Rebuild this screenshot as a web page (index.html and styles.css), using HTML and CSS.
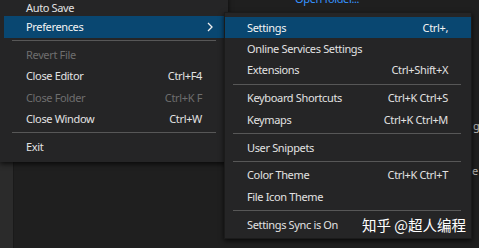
FILE: index.html
```html
<!DOCTYPE html>
<html>
<head>
<meta charset="utf-8">
<link rel="stylesheet" href="styles.css">
</head>
<body>
<div class="workbench">
  <div class="sidebar"></div>
  <div class="editor">
    <div class="editor-main">
      <span class="link">Open folder...</span>
    </div>
    <div class="editor-peek">
      <span class="peek-g">g</span>
      <span class="peek-e">e</span>
    </div>
  </div>
</div>

<div class="menu menu-file">
  <div class="item item-top"><span>Auto Save</span></div>
  <div class="item active has-sub"><span>Preferences</span>
    <svg class="chev" width="6" height="10" viewBox="0 0 6 10"><path d="M1 1 L5 5 L1 9" fill="none" stroke="#f0f0f0" stroke-width="1.3"/></svg>
  </div>
  <div class="sep"></div>
  <div class="item disabled"><span>Revert File</span></div>
  <div class="item"><span>Close Editor</span><span class="key">Ctrl+F4</span></div>
  <div class="item disabled"><span>Close Folder</span><span class="key">Ctrl+K F</span></div>
  <div class="item"><span>Close Window</span><span class="key">Ctrl+W</span></div>
  <div class="sep"></div>
  <div class="item"><span>Exit</span></div>
</div>

<div class="menu menu-sub">
  <div class="item active"><span>Settings</span><span class="key">Ctrl+,</span></div>
  <div class="item"><span>Online Services Settings</span></div>
  <div class="item"><span>Extensions</span><span class="key">Ctrl+Shift+X</span></div>
  <div class="sep"></div>
  <div class="item"><span>Keyboard Shortcuts</span><span class="key">Ctrl+K Ctrl+S</span></div>
  <div class="item"><span>Keymaps</span><span class="key">Ctrl+K Ctrl+M</span></div>
  <div class="sep"></div>
  <div class="item"><span>User Snippets</span></div>
  <div class="sep"></div>
  <div class="item"><span>Color Theme</span><span class="key">Ctrl+K Ctrl+T</span></div>
  <div class="item"><span>File Icon Theme</span></div>
  <div class="sep"></div>
  <div class="item"><span>Settings Sync is On</span></div>
</div>

<div class="watermark">知乎 @超人编程</div>
</body>
</html>
```
FILE: styles.css
```css
html, body {
  margin: 0;
  padding: 0;
}
body {
  width: 479px;
  height: 248px;
  overflow: hidden;
  position: relative;
  background: #1e1e1e;
  font-family: "Noto Sans", "Open Sans", sans-serif;
  font-size: 11px;
  letter-spacing: -0.35px;
}
.workbench {
  display: grid;
  grid-template-columns: 14px 1fr;
  height: 248px;
}
.sidebar {
  background: #2b2b2b;
  border-right: 1px solid #1a1a1a;
}
.editor {
  display: grid;
  grid-template-columns: 1fr 7px;
  background: #1f1f1f;
}
.editor-main {
  padding-left: 281px;
}
.link {
  display: block;
  margin-top: -9px;
  color: #3794ff;
  line-height: 16px;
}
.editor-peek {
  display: flex;
  flex-direction: column;
  color: #bbbbbb;
  overflow: hidden;
  line-height: 14px;
}
.peek-g { margin-top: 119px; margin-left: 1px; }
.peek-e { margin-top: 31px; }

.menu {
  position: absolute;
  background: #252526;
  color: #e2e2e2;
  box-shadow: 0 2px 5px rgba(0, 0, 0, 0.7);
}
.menu-file {
  left: 0;
  top: -5px;
  width: 220px;
  padding: 0 4px 5px;
}
.menu-sub {
  left: 224px;
  top: 12px;
  width: 246px;
  padding: 4px 0 3px;
  border: 1px solid #1b1b1b;
}
.item {
  box-sizing: border-box;
  display: flex;
  align-items: center;
  justify-content: space-between;
  height: 21.3px;
  padding: 0 22px;
  white-space: nowrap;
  line-height: 12px;
}
.item.item-top {
  padding-top: 5px;
}
.menu-sub .item {
  padding: 0 23px 0 22px;
}
.item.active {
  background: #094771;
  color: #f4f4f4;
}
.item.has-sub {
  padding-right: 11px;
}
.item.disabled {
  color: #6e6e6e;
}
.sep {
  height: 6.7px;
  margin: 0 8px;
  display: flex;
  align-items: center;
}
.sep::before {
  content: "";
  display: block;
  flex: 1;
  height: 1px;
  background: #575757;
}
.menu-sub .sep {
  margin: 0 10px 0 8px;
}
.watermark {
  position: absolute;
  left: 362px;
  top: 214px;
  font-family: "Noto Sans CJK SC", sans-serif;
  font-size: 14.5px;
  line-height: 22px;
  color: #ffffff;
  letter-spacing: 0;
}
```
